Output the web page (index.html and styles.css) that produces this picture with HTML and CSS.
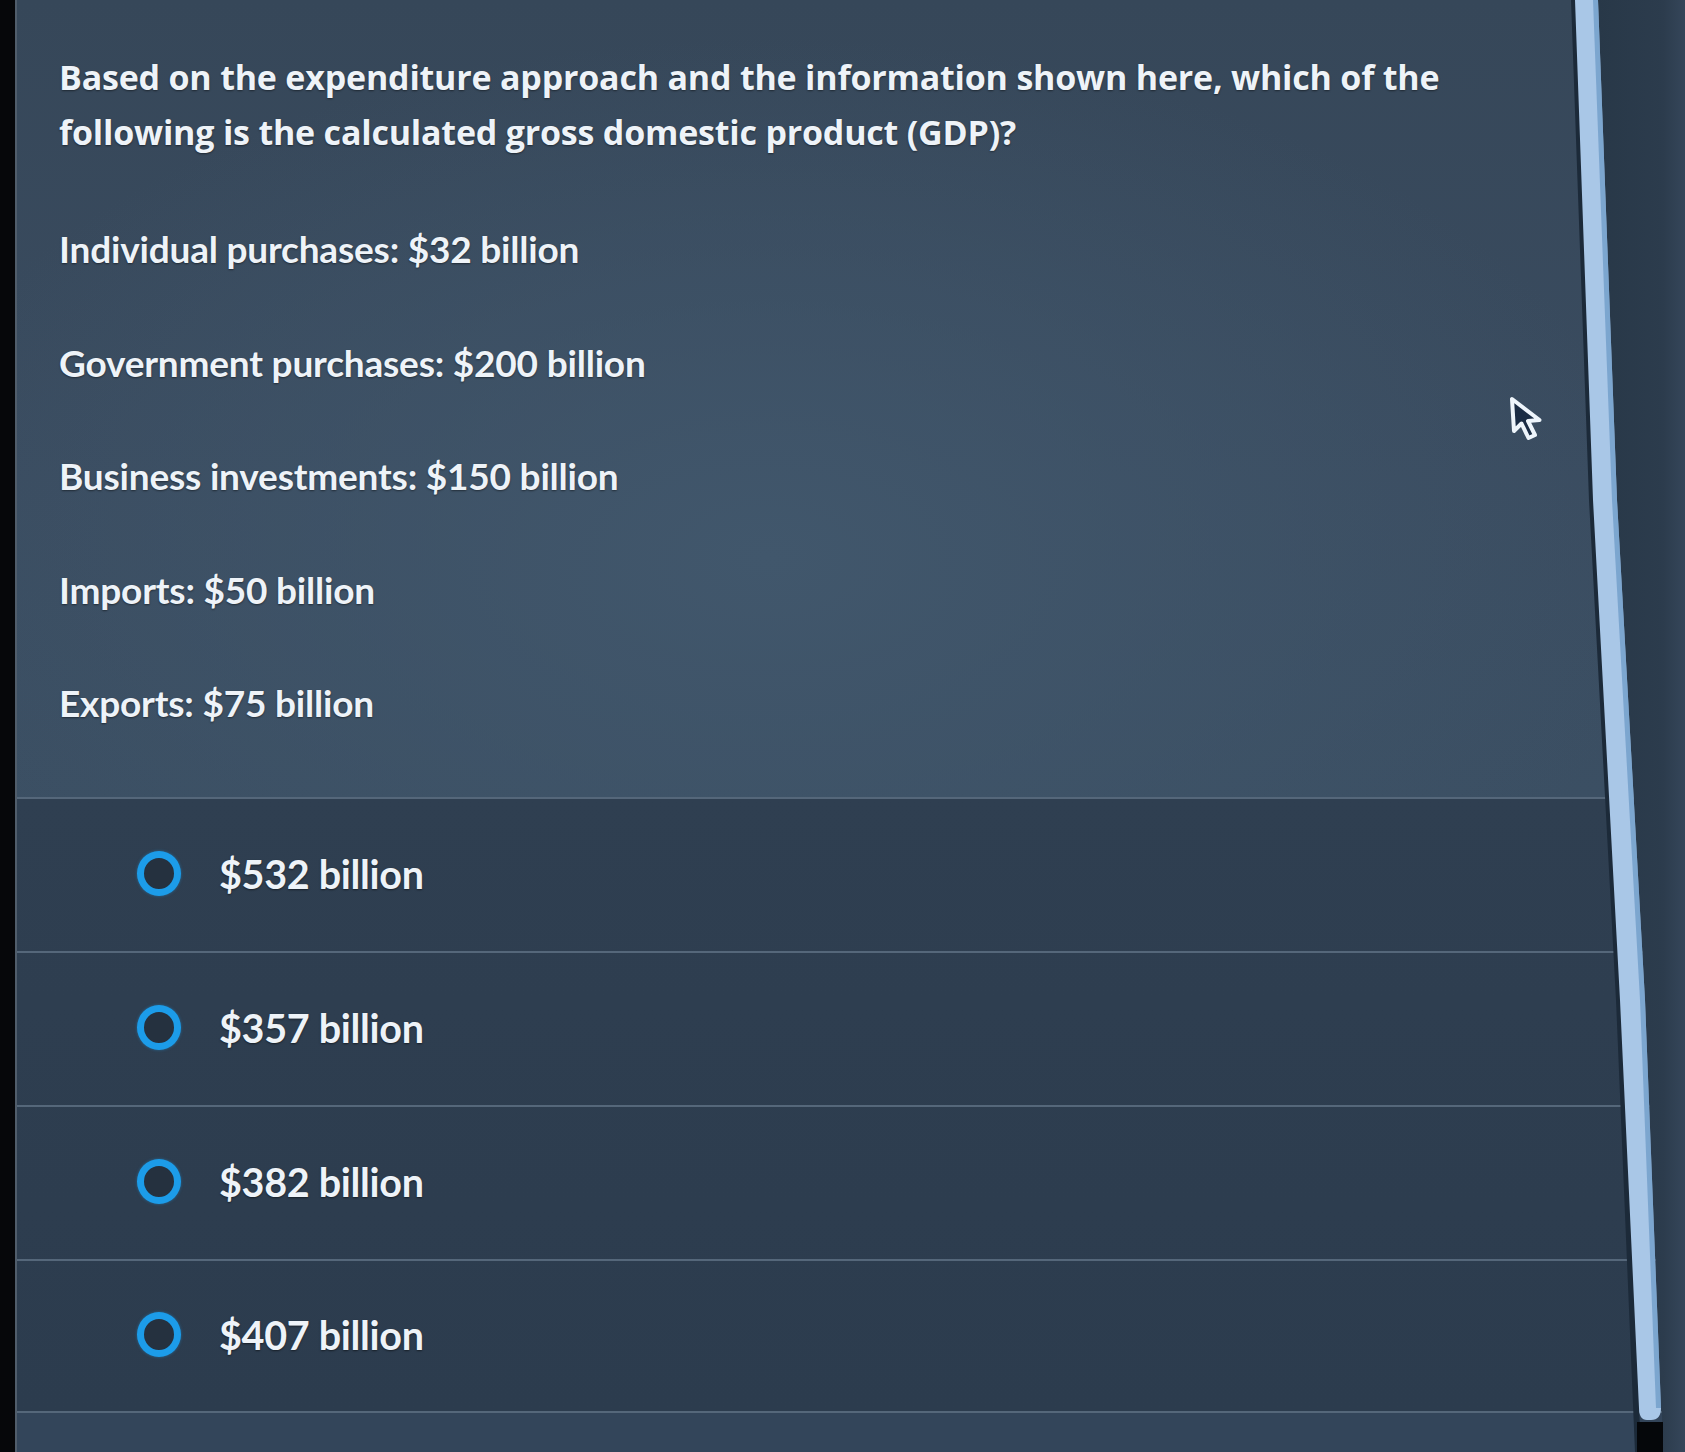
FILE: index.html
```html
<!DOCTYPE html>
<html lang="en">
<head>
<meta charset="utf-8">
<title>GDP question</title>
<link rel="stylesheet" href="styles.css">
</head>
<body>
<div class="screen">
  <div class="bezel"></div>
  <main class="panel">
    <section class="question">
      <h1 class="q-title">Based on the expenditure approach and the information shown here, which of the<br>following is the calculated gross domestic product (GDP)?</h1>
      <div class="facts">
        <p class="fact">Individual purchases: $32 billion</p>
        <p class="fact">Government purchases: $200 billion</p>
        <p class="fact">Business investments: $150 billion</p>
        <p class="fact">Imports: $50 billion</p>
        <p class="fact">Exports: $75 billion</p>
      </div>
    </section>
    <ul class="options">
      <li class="option"><span class="radio"></span><span class="opt-text">$532 billion</span></li>
      <li class="option"><span class="radio"></span><span class="opt-text">$357 billion</span></li>
      <li class="option"><span class="radio"></span><span class="opt-text">$382 billion</span></li>
      <li class="option"><span class="radio"></span><span class="opt-text">$407 billion</span></li>
    </ul>
    <div class="footer-strip"></div>
  </main>
  <svg class="scroll-edge" width="200" height="1452" viewBox="0 0 200 1452" aria-hidden="true">
    <defs>
      <linearGradient id="rightShade" x1="0" y1="0" x2="1" y2="0">
        <stop offset="0" stop-color="#283848"/>
        <stop offset="0.75" stop-color="#2c3c4d"/>
        <stop offset="1" stop-color="#35465a"/>
      </linearGradient>
    </defs>
    <polygon points="113,0 200,0 200,1452 177,1452 177,1417 160,1000 132,500" fill="url(#rightShade)"/>
    <polygon points="86,0 92,0 110,500 137,1000 156,1452 150,1452 131,1000 104,500" fill="#1c2a39"/>
    <path d="M90,0 L113,0 L132,500 L160,1000 L176,1408 Q176,1420 166,1420 L162,1420 Q154,1420 154,1408 L135,1000 L108,500 Z" fill="#a9c7e7"/>
    <path d="M108,0 L113,0 L132,500 L160,1000 L176,1408 L171,1408 L155,1000 L127,500 Z" fill="#5f8fc0" opacity="0.6"/>
    <rect x="152" y="1422" width="26" height="30" fill="#05070a"/>
  </svg>
  <svg class="cursor" width="36" height="48" viewBox="0 0 36 48" aria-hidden="true">
    <path d="M3,3 L5,35 L12.5,27.5 L19.5,42 L26,39 L19,25 L30.5,24 Z" fill="#1a2c44" stroke="#eef5fb" stroke-width="4" stroke-linejoin="round"/>
  </svg>
</div>
</body>
</html>
```
FILE: styles.css
```css
* { box-sizing: border-box; }
html, body {
  margin: 0;
  padding: 0;
  width: 1685px;
  height: 1452px;
  overflow: hidden;
  background: #06080b;
}
.screen {
  position: relative;
  display: flex;
  width: 1685px;
  height: 1452px;
  font-family: "Lato", "Open Sans", "Liberation Sans", sans-serif;
  color: #eef3f8;
}
.bezel {
  width: 17px;
  flex: none;
  background: #06070a;
  border-right: 2px solid #505d6b;
}
.panel {
  flex: 1;
  display: flex;
  flex-direction: column;
  min-width: 0;
}
.question {
  height: 797px;
  flex: none;
  padding: 50px 0 0 42px;
  background:
    radial-gradient(ellipse 900px 520px at 45% 70%, #41576c 0%, rgba(65,87,108,0) 100%),
    linear-gradient(180deg, #364759 0%, #3a4c60 60%, #3b4f63 100%);
}
.q-title {
  margin: 0;
  font-family: "Open Sans", "Lato", sans-serif;
  font-size: 34px;
  font-weight: 700;
  line-height: 55px;
  letter-spacing: -0.2px;
  white-space: nowrap;
  text-shadow: 0 1px 2px rgba(0,0,0,0.45);
}
.facts {
  display: flex;
  flex-direction: column;
  gap: 71.5px;
  margin-top: 68px;
}
.fact {
  margin: 0;
  font-size: 37px;
  font-weight: 700;
  line-height: 42px;
  letter-spacing: -0.2px;
  text-shadow: 0 1px 2px rgba(0,0,0,0.45);
}
.options {
  list-style: none;
  margin: 0;
  padding: 0;
  background: linear-gradient(180deg, #2f3f51 0%, #2c3c4e 100%);
}
.option {
  display: flex;
  align-items: center;
  gap: 38px;
  height: 154px;
  padding: 0 0 4px 120px;
  border-top: 2px solid #55677a;
}
.option:last-child {
  border-bottom: 2px solid #55677a;
}
.radio {
  width: 44px;
  height: 45px;
  flex: none;
  border-radius: 50%;
  border: 7px solid #1c9ce9;
  background: #25313f;
  box-shadow: 0 0 3px rgba(30,154,230,0.5);
}
.opt-text {
  font-size: 39.5px;
  font-weight: 700;
  letter-spacing: -0.3px;
  text-shadow: 0 1px 2px rgba(0,0,0,0.5);
}
.footer-strip {
  flex: 1;
  background: #33455a;
}
.scroll-edge {
  position: absolute;
  top: 0;
  right: 0;
}
.cursor {
  position: absolute;
  left: 1509px;
  top: 396px;
}
```
